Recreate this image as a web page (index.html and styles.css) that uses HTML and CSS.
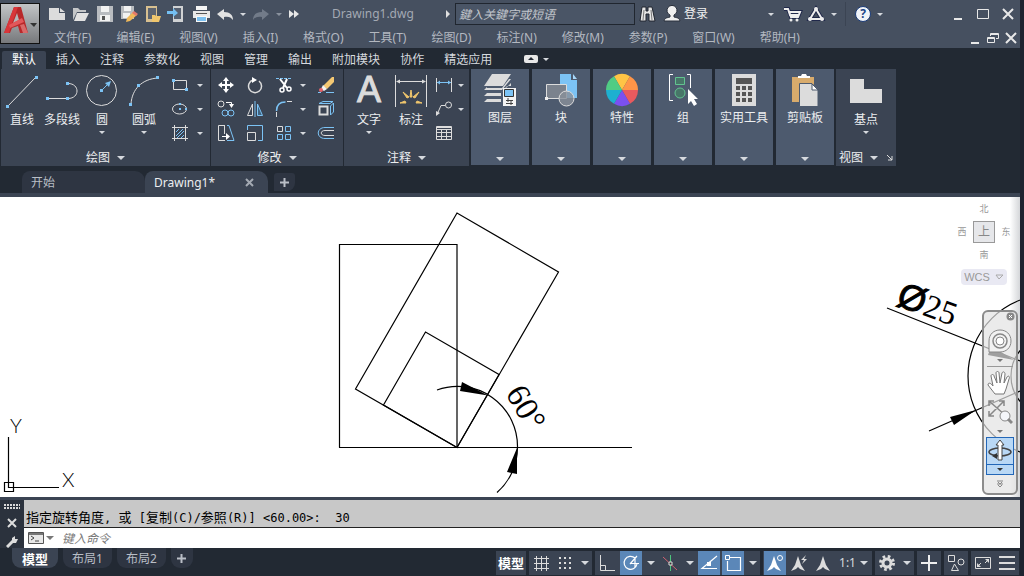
FILE: index.html
```html
<!DOCTYPE html>
<html lang="zh-CN">
<head>
  <meta charset="UTF-8" />
  <meta name="viewport" content="width=device-width, initial-scale=1.0" />
  <title>Drawing1.dwg</title>
  <link rel="stylesheet" href="styles.css">
</head>
<body>
<div class="app">

  <header class="header">
    <button class="app-btn" aria-label="应用程序菜单">
      <svg width="38" height="39" viewBox="0 0 38 39">
        <path d="M3 29L13 3h7l7 26h-8l-2-7-6 2-2 5z" fill="#b8282a"/>
        <path d="M13 3h4l-6 16-3 10H3z" fill="#d8363a"/>
        <path d="M16 9l-4 10 6-3z" fill="#b4b6b8"/>
        <path d="M8 21l13-7 2 4-14 6z" fill="#e2575a"/>
        <path d="M19 21l4-1 4 9h-5z" fill="#d86a6a"/>
        <path d="M29 19h7l-3 4z" fill="#333"/>
      </svg>
    </button>
    <div class="header-rows">
      <div class="title-row">
        <button class="ic" aria-label="新建"><svg viewBox="0 0 24 24"><path d="M4 6h10v5h6v7H4z" fill="#dcdcdc"/><path d="M15 6l5 4h-5z" fill="#dcdcdc"/></svg></button>
        <button class="ic" aria-label="打开"><svg viewBox="0 0 24 24"><path d="M4 18V6h5l2 2h6v2H8z" fill="#c4c6c8"/><path d="M8 11h12l-4 8H5z" fill="#e2e2e2"/></svg></button>
        <button class="ic" aria-label="保存"><svg viewBox="0 0 24 24"><path d="M4 4h16v16H4z" fill="#b9bcc0"/><path d="M8 4h8v6H8z" fill="#f2f2f2"/><path d="M7 13h10v6H7z" fill="#f2f2f2"/><path d="M9 14h3v4H9z" fill="#555"/></svg></button>
        <button class="ic" aria-label="另存为"><svg viewBox="0 0 24 24"><path d="M4 4h13v13H4z" fill="#b9bcc0"/><path d="M7 4h7v5H7zM6 11h7v5H6z" fill="#f2f2f2"/><path d="M9 20l1-4 6-6 4 3-7 6z" fill="#f0b95a"/><path d="M15 11l2-2 4 3-2 2z" fill="#e47a6b"/></svg></button>
        <button class="ic" aria-label="从移动设备打开"><svg viewBox="0 0 24 24"><path d="M5 4h11v16H5z" fill="#d8c090"/><path d="M7 6h8v11H7z" fill="#5d6470"/><path d="M11 20v-7h3l1 1h5l-2 6z" fill="#f0c66d"/></svg></button>
        <button class="ic" aria-label="保存到移动设备"><svg viewBox="0 0 24 24"><path d="M8 4h10v16H8z" fill="#d0d2d4"/><path d="M9 6h7v11H9z" fill="#566070"/><path d="M2 9h6V6l5 5-5 4v-3H2z" fill="#74bff2"/></svg></button>
        <button class="ic" aria-label="打印"><svg viewBox="0 0 24 24"><path d="M7 4h11v4H7z" fill="#f5f5f5"/><path d="M4 9h17v7H4z" fill="#e8e8e8"/><path d="M7 11h11v1H7z" fill="#555"/><path d="M7 14h11v6H7z" fill="#f8f8f8"/><path d="M8 15h9v4H8z" fill="#7cc0f0"/></svg></button>
        <button class="ic" aria-label="放弃"><svg viewBox="0 0 24 24"><path d="M4 12l7-5v3c6 0 9 3 9 8-2-3-5-4-9-3v3z" fill="#e2e2e2"/></svg></button>
        <button class="drop" aria-label="放弃列表"><i class="caret"></i></button>
        <button class="ic" aria-label="重做"><svg viewBox="0 0 24 24"><path d="M20 12l-7-5v3c-6 0-9 3-9 8 2-3 5-4 9-3v3z" fill="#727b89"/></svg></button>
        <button class="drop" aria-label="重做列表"><i class="caret dim-caret"></i></button>
        <button class="drop wide" aria-label="更多"><svg width="10" height="8" viewBox="0 0 10 8"><path d="M0 0l5 4-5 4zM5 0l5 4-5 4z" fill="#e8e8e8"/></svg></button>
        <h1 class="doc-title">Drawing1.dwg</h1>
        <i class="arrow-right"></i>
        <input class="search" type="text" aria-label="搜索" placeholder="鍵入关鍵字或短语">
        <button class="ic" aria-label="查找"><svg viewBox="0 0 24 24"><path d="M7 5h4v4h2V5h4l3 14h-6v-7h-3v7H5z" fill="#e6e6e6" stroke="#20252e"/><path d="M9 8L8 18M16 8l1 10" stroke="#777"/></svg></button>
        <button class="ic" aria-label="用户"><svg viewBox="0 0 24 24"><path d="M5 19c1-4 4-3 6-4v-2a5 5 0 1 1 4 0v2c2 1 5 0 6 4z" fill="#f0f0f0" stroke="#2a303c"/></svg></button>
        <button class="login">登录</button>
        <button class="drop" aria-label="登录选项"><i class="caret"></i></button>
        <button class="ic" aria-label="应用商店"><svg viewBox="0 0 24 24"><path d="M4 7h4l3 8h7l2-5H9" fill="none" stroke="#20284a" stroke-width="4"/><path d="M4 7h4l3 8h7l2-5H9l1 3h9" fill="none" stroke="#eee" stroke-width="2"/><circle cx="11" cy="18" r="1.500" fill="#eee"/><circle cx="17" cy="18" r="1.500" fill="#eee"/></svg></button>
        <button class="ic" aria-label="保持连接"><svg viewBox="0 0 24 24"><path d="M12 7l6 10H6z" fill="none" stroke="#20284a" stroke-width="4"/><path d="M12 7l6 10H6z" fill="none" stroke="#eee" stroke-width="2"/><circle cx="12" cy="7" r="2" fill="#eee"/><circle cx="6" cy="17" r="2" fill="#eee"/><circle cx="18" cy="17" r="2" fill="#eee"/></svg></button>
        <button class="drop" aria-label="连接选项"><i class="caret"></i></button>
        <i class="sep"></i>
        <button class="help" aria-label="帮助">?</button>
        <button class="drop" aria-label="帮助选项"><i class="caret"></i></button>
        <div class="win-btns">
          <button aria-label="最小化"><svg width="12" height="12"><path d="M2 11h8" stroke="#e8e8e8" stroke-width="2"/></svg></button>
          <button aria-label="最大化"><svg width="12" height="12"><path d="M.5 1.500h11v9H.5z" fill="none" stroke="#e8e8e8"/></svg></button>
          <button aria-label="关闭"><svg width="12" height="12"><path d="M1 1l10 10M11 1L1 11" stroke="#e8e8e8" stroke-width="2"/></svg></button>
        </div>
      </div>
      <nav class="menu-row">
        <a href="#">文件(F)</a>
        <a href="#">编辑(E)</a>
        <a href="#">视图(V)</a>
        <a href="#">插入(I)</a>
        <a href="#">格式(O)</a>
        <a href="#">工具(T)</a>
        <a href="#">绘图(D)</a>
        <a href="#">标注(N)</a>
        <a href="#">修改(M)</a>
        <a href="#">参数(P)</a>
        <a href="#">窗口(W)</a>
        <a href="#">帮助(H)</a>
        <div class="win-btns small">
          <button aria-label="最小化图形"><svg width="12" height="12"><path d="M2 11h8" stroke="#e8e8e8" stroke-width="2"/></svg></button>
          <button aria-label="还原图形"><svg width="12" height="12"><path d="M3.500 4V1.500h8v5H9M3 2.500h9M.5 5.500h7v5h-7zM0 6.500h8" fill="none" stroke="#e8e8e8"/></svg></button>
          <button aria-label="关闭图形"><svg width="12" height="12"><path d="M1 1l10 10M11 1L1 11" stroke="#e8e8e8" stroke-width="2"/></svg></button>
        </div>
      </nav>
    </div>
  </header>

  <nav class="ribbon-tabs">
    <a href="#" class="active">默认</a>
    <a href="#">插入</a>
    <a href="#">注释</a>
    <a href="#">参数化</a>
    <a href="#">视图</a>
    <a href="#">管理</a>
    <a href="#">输出</a>
    <a href="#">附加模块</a>
    <a href="#">协作</a>
    <a href="#">精选应用</a>
    <button class="collapse" aria-label="最小化功能区"><svg width="14" height="8"><rect width="14" height="8" rx="2" fill="#e8e8e8"/><path d="M4 5l3-3 3 3z" fill="#222933"/></svg></button>
    <button class="drop" aria-label="功能区选项"><i class="caret"></i></button>
  </nav>

  <section class="ribbon">
    <div class="panel">
      <div class="panel-body">
        <button class="big"><svg viewBox="0 0 36 36"><path d="M4 33L32 4" stroke="#dcdcdc"/><path d="M2 32h3v3H2zM31 3h3v3h-3z" fill="#7cc3f5"/></svg>直线</button>
        <button class="big narrow"><svg viewBox="0 0 36 36"><path d="M4 25.500h20c12 0 12-15 0-15" fill="none" stroke="#dcdcdc"/><path d="M2 24h3v3H2zM22 24h3v3h-3zM22 9h3v3h-3z" fill="#7cc3f5"/></svg>多段线</button>
        <button class="big"><svg viewBox="0 0 36 36"><circle cx="17.500" cy="17.500" r="15" fill="none" stroke="#dcdcdc"/><path d="M18 17l6-6" stroke="#7cc3f5"/><path d="M21 10l6-2-2 6zM16 16h3v3h-3z" fill="#7cc3f5"/></svg>圆<i class="caret"></i></button>
        <button class="big"><svg viewBox="0 0 36 36"><path d="M5 31C6 16 16 6 32 5" fill="none" stroke="#dcdcdc"/><path d="M3 30h3v3H3zM11 11h3v3h-3zM30 3h3v3h-3z" fill="#7cc3f5"/></svg>圆弧<i class="caret"></i></button>
        <div class="tools draw-tools">
          <button aria-label="矩形"><svg viewBox="0 0 18 18"><path d="M2.500 4.500h13v9h-13z" fill="none" stroke="#dcdcdc"/><path d="M1 3h3v3H1zM14 12h3v3h-3z" fill="#7cc3f5"/></svg></button><button aria-label="矩形列表"><i class="caret"></i></button>
          <button aria-label="椭圆"><svg viewBox="0 0 18 18"><ellipse cx="8.500" cy="9" rx="7" ry="5" fill="none" stroke="#dcdcdc"/><path d="M8 8h2v2H8zM8 3h2v2H8zM14 8h2v2h-2z" fill="#7cc3f5"/></svg></button><button aria-label="椭圆列表"><i class="caret"></i></button>
          <button aria-label="图案填充"><svg viewBox="0 0 18 18"><path d="M1 3.500h16M1 14.500h16M3.500 1v16M14.500 1v16" stroke="#dcdcdc"/><path d="M5 8l3-3M5 12l7-7M6 14l7-7M10 14l3-3" stroke="#7cc3f5"/></svg></button><button aria-label="填充列表"><i class="caret"></i></button>
        </div>
      </div>
      <button class="panel-title">绘图<i class="caret large"></i></button>
    </div>

    <div class="panel">
      <div class="panel-body">
        <div class="tools modify-tools">
          <button aria-label="移动"><svg viewBox="0 0 18 18"><path d="M9 3v12M3 9h12" stroke="#fff" stroke-width="2"/><path d="M9 1l3 4H6zM9 17l3-4H6zM1 9l4-3v6zM17 9l-4-3v6z" fill="#fff"/></svg></button>
          <button aria-label="旋转"><svg viewBox="0 0 18 18"><path d="M7 4a6.500 6.500 0 1 0 6 1" fill="none" stroke="#dcdcdc" stroke-width="1.500"/><path d="M6 1l5 3-5 3z" fill="#fff"/></svg></button>
          <button aria-label="修剪"><svg viewBox="0 0 18 18"><path d="M1 2.500h16" stroke="#7cc3f5" stroke-dasharray="3 1"/><path d="M5 3l7 9M12 3l-4 9" stroke="#fff" stroke-width="2"/><circle cx="7" cy="14" r="2" fill="none" stroke="#fff" stroke-width="1.500"/><circle cx="14" cy="13" r="2" fill="none" stroke="#fff" stroke-width="1.500"/></svg></button><button aria-label="修剪列表"><i class="caret"></i></button>
          <button aria-label="删除"><svg viewBox="0 0 18 18"><path d="M17 1v5l-7 7-4-3 9-9z" fill="#f4c873"/><path d="M6 9l4 4-3 2-3-2z" fill="#f4f4f4"/><circle cx="4" cy="14" r="2" fill="#e5646a"/><path d="M1 16.500h3M9 16.500h8" stroke="#7cc3f5"/></svg></button>
          <button aria-label="复制"><svg viewBox="0 0 18 18"><circle cx="4" cy="4" r="3" fill="none" stroke="#dcdcdc"/><path d="M9 2.500h5.500V6" fill="none" stroke="#fff"/><path d="M12 4h5l-2.500 4z" fill="#fff"/><circle cx="8" cy="13" r="3" fill="none" stroke="#7cc3f5"/><circle cx="14" cy="13" r="3" fill="none" stroke="#7cc3f5"/></svg></button>
          <button aria-label="镜像"><svg viewBox="0 0 18 18"><path d="M6.500 4v11.500H1.500z" fill="none" stroke="#dcdcdc"/><path d="M11.500 4v11.500h5z" fill="#3f6482" stroke="#7cc3f5"/><path d="M9 1v16" stroke="#7cc3f5"/></svg></button>
          <button aria-label="圆角"><svg viewBox="0 0 18 18"><path d="M1.500 11c0-6 3-9 9-9" fill="none" stroke="#7cc3f5" stroke-width="1.500"/><path d="M12 1.500h5M1.500 12v5" stroke="#dcdcdc"/></svg></button><button aria-label="圆角列表"><i class="caret"></i></button>
          <button aria-label="分解"><svg viewBox="0 0 18 18"><path d="M2.500 6.500h8v8h-8z" fill="none" stroke="#dcdcdc" stroke-width="2"/><path d="M2 3.500l4-2h10l-3 2zM13.500 6l3-3v9l-3 3z" fill="none" stroke="#7cc3f5"/></svg></button>
          <button aria-label="拉伸"><svg viewBox="0 0 18 18"><path d="M8 1.500H1.500v15H8M7.500 1v9" fill="none" stroke="#dcdcdc"/><path d="M10 1.500h2l5 15h-7" fill="none" stroke="#7cc3f5"/><path d="M5 12.500h5" stroke="#fff"/><path d="M9 9l4 3.500L9 16z" fill="#fff"/></svg></button>
          <button aria-label="缩放"><svg viewBox="0 0 18 18"><path d="M1.500 6V1.500h15v15H12" fill="none" stroke="#7cc3f5"/><path d="M1.500 8.500h8v8h-8z" fill="none" stroke="#dcdcdc"/></svg></button>
          <button aria-label="阵列"><svg viewBox="0 0 18 18"><path d="M2.500 2.500h5v5h-5z" fill="none" stroke="#dcdcdc"/><path d="M10.500 2.500h5v5h-5zM2.500 10.500h5v5h-5zM10.500 10.500h5v5h-5z" fill="none" stroke="#7cc3f5"/></svg></button><button aria-label="阵列列表"><i class="caret"></i></button>
          <button aria-label="偏移"><svg viewBox="0 0 18 18"><path d="M17 3.500H8c-9 0-9 11 0 11h9" fill="none" stroke="#7cc3f5"/><path d="M17 6.500H8c-5 0-5 5 0 5h9" fill="none" stroke="#dcdcdc"/></svg></button>
        </div>
      </div>
      <button class="panel-title">修改<i class="caret large"></i></button>
    </div>

    <div class="panel annotate">
      <div class="panel-body">
        <button class="big"><svg viewBox="0 0 36 36"><text x="18" y="29" class="big-a">A</text></svg>文字<i class="caret"></i></button>
        <button class="big"><svg viewBox="0 0 36 36"><path d="M2.500 2v32M33.500 2v32M4 8.500h28" stroke="#dcdcdc"/><path d="M3 8.500l4-2v4zM33 8.500l-4-2v4z" fill="#dcdcdc"/><path d="M17 24l1-7 1 7zM14 25l-4-6 6 5zM22 25l4-6-6 5zM12 28l-5 2h6zM24 28l5 2h-6z" fill="#f0c66d" stroke="#f0c66d"/></svg>标注</button>
        <div class="tools note-tools">
          <button aria-label="线性"><svg viewBox="0 0 18 18"><path d="M1.500 2v14M16.500 2v14" stroke="#dcdcdc"/><path d="M2 6.500h14" stroke="#7cc3f5"/><path d="M2 6.500l3-2v4zM16 6.500l-3-2v4z" fill="#7cc3f5"/></svg></button><button aria-label="标注列表"><i class="caret"></i></button>
          <button aria-label="引线"><svg viewBox="0 0 18 18"><circle cx="13.500" cy="5" r="3" fill="none" stroke="#dcdcdc"/><path d="M10 5.500H6l-4 9" fill="none" stroke="#dcdcdc"/><path d="M1 16v-5l4 2z" fill="#dcdcdc"/></svg></button><button aria-label="引线列表"><i class="caret"></i></button>
          <button aria-label="表格"><svg viewBox="0 0 18 18"><path d="M1.500 2.500h15v13h-15zM1 5.500h16M1 8.500h16M1 12.500h16M6.500 6v10M11.500 6v10M1 3.500h16" fill="none" stroke="#dcdcdc"/></svg></button>
        </div>
      </div>
      <button class="panel-title">注释<i class="caret large"></i></button>
    </div>

    <button class="group">
      <svg viewBox="0 0 36 36"><path d="M10 1h19L21 13H2zM5 14l-3 3h18l9-11-2 0-7 9H5zM5 20l-3 3h17v-3zM5 26l-3 3h17v-3zM20 19l9-9v3h-4z" fill="#dcdcdc"/><path d="M21 15h13v18H21z" fill="#f4f4f4"/><path d="M22.500 16.500h9v7h-9z" fill="#7cc3f5" stroke="#333"/><path d="M24 27.500h7M24 30.500h7M26 25v4M29 28v4" stroke="#444"/></svg>
      图层<i class="caret large"></i>
    </button>
    <button class="group">
      <svg viewBox="0 0 36 36"><path d="M17 1h11v6h6v18H17z" fill="#7cc3f5"/><path d="M30 1l4 5h-4z" fill="#a8d8fa"/><path d="M3.500 11.500h20v14h-20z" fill="#7b828d" stroke="#dcdcdc"/><path d="M2 24h3v3H2z" fill="#eee"/><circle cx="23.500" cy="25.500" r="7.500" fill="#8a909a" fill-opacity=".8" stroke="#dcdcdc"/></svg>
      块<i class="caret large"></i>
    </button>
    <button class="group">
      <svg viewBox="0 0 36 36">
        <path d="M18 17L10 3.150A16 16 0 0 1 26 3.150z" fill="#ffc445"/>
        <path d="M18 17L26 3.150A16 16 0 0 1 34 17z" fill="#ff9548"/>
        <path d="M18 17h16A16 16 0 0 1 26 30.850z" fill="#e85a5e"/>
        <path d="M18 17l8 13.850a16 16 0 0 1-16 0z" fill="#7b50f0"/>
        <path d="M18 17l-8 13.850A16 16 0 0 1 2 17z" fill="#1eb0d0"/>
        <path d="M18 17H2A16 16 0 0 1 10 3.150z" fill="#50cc84"/>
      </svg>
      特性<i class="caret large"></i>
    </button>
    <button class="group">
      <svg viewBox="0 0 36 36"><path d="M8 1.500H4.500v26H8M22 1.500h3.500V15" fill="none" stroke="#fff"/><path d="M10.500 4.500h9v7h-9z" fill="#477668" stroke="#62c490"/><circle cx="15" cy="20" r="5" fill="#477668" stroke="#62c490"/><path d="M23 16v15l3-3 3 5 3-2-3-5h4z" fill="#fff"/></svg>
      组<i class="caret large"></i>
    </button>
    <button class="group">
      <svg viewBox="0 0 36 36"><path d="M6 1h24v32H6z" fill="#dcdcdc"/><path d="M10 5h16v6H10zM10 13h4v4h-4zM16 13h4v4h-4zM22 13h4v4h-4zM10 19h4v4h-4zM16 19h4v4h-4zM22 19h4v4h-4zM10 25h4v4h-4zM16 25h4v4h-4zM22 25h4v4h-4z" fill="#555"/></svg>
      实用工具<i class="caret large"></i>
    </button>
    <button class="group">
      <svg viewBox="0 0 36 36"><path d="M5 4h22v25H5z" fill="#d8ab6c"/><path d="M11 5V3h3l1-2h4l1 2h3v2z" fill="#fff"/><path d="M12.500 10.500H25l6 6v17H12.500z" fill="#dcdcdc" stroke="#4d5a6e"/><path d="M25 11l6 6h-6z" fill="#fff" stroke="#4d5a6e"/></svg>
      剪贴板<i class="caret large"></i>
    </button>

    <div class="panel view">
      <div class="panel-body">
        <button class="big"><svg viewBox="0 0 36 36"><path d="M2 6h14v10h18v14H2z" fill="#dcdcdc"/></svg>基点<i class="caret"></i></button>
      </div>
      <button class="panel-title">视图<i class="caret large"></i><svg class="launch" width="6" height="6"><path d="M0 0l5 5M5 1v4H1" fill="none" stroke="#dcdcdc"/></svg></button>
    </div>
  </section>

  <nav class="file-tabs">
    <a href="#" class="file-tab">开始</a>
    <a href="#" class="file-tab active">Drawing1*<svg class="close" width="9" height="9"><path d="M1 1l7 7M8 1L1 8" stroke="#a4aab3" stroke-width="2"/></svg></a>
    <button class="add-tab" aria-label="新图形"><svg width="9" height="9"><path d="M4.500 0v9M0 4.500h9" stroke="#b9bec6" stroke-width="2"/></svg></button>
  </nav>

  <main class="canvas">
    <svg class="drawing" viewBox="0 197 1020 300" preserveAspectRatio="xMinYMin slice">
      <g fill="none" stroke="#000" stroke-width="1.200">
        <path d="M339.500 447.500V244.500H457V447.500M339 447.500H632"/>
        <path d="M457 447.500L355.500 389 457 213 558.500 272z"/>
        <path d="M457 447.500L383.500 405 425.500 332 499 374.500z"/>
        <path d="M437 390A60 60 0 0 1 517.500 447A60 60 0 0 1 497 492.500"/>
        <circle cx="1049.500" cy="376" r="81.500"/>
        <circle cx="1051" cy="376" r="40"/>
        <path d="M887 308L1020 361M929 431L1020 391"/>
        <path d="M8.500 437V487.500H59M4.500 482.500h9v9h-9z"/>
      </g>
      <path d="M488 395.500L462 382 460 391zM517 448L517 474 507 472zM976 410L950 417 954 425zM1014 360L991 346 988 355z"/>
      <text x="10" y="433" class="ucs">Y</text>
      <text x="62" y="487" class="ucs">X</text>
      <text class="dim" transform="translate(505 393) rotate(60)">60°</text>
      <text class="dim" transform="translate(895 305) rotate(20)"><tspan class="dia">Ø</tspan>25</text>
    </svg>

    <div class="viewcube">
      <span class="north">北</span>
      <span>西</span>
      <button class="face">上</button>
      <span>东</span>
      <span class="south">南</span>
    </div>
    <button class="wcs">WCS <svg width="9" height="6"><path d="M1 1h7L4 5z" fill="none" stroke="#aaa"/></svg></button>

    <div class="navbar">
      <button class="nav-close" aria-label="关闭导航栏"><svg width="9" height="9"><circle cx="4.500" cy="4.500" r="4" fill="#888"/><path d="M3 3l3 3M6 3L3 6" stroke="#fff"/></svg></button>
      <button aria-label="导航控制盘"><svg width="26" height="26"><path d="M2 24V13C2 6 7 2 13 2s11 4 11 11-5 11-11 11z" fill="#f2f2f2" stroke="#888"/><circle cx="13" cy="13" r="7" fill="none" stroke="#888" stroke-width="1.500"/><circle cx="13" cy="13" r="4" fill="#fff" stroke="#888"/></svg></button>
      <i class="caret gray"></i>
      <i class="rule"></i>
      <button class="nav-tool" aria-label="平移"><svg width="26" height="26"><path d="M8 24L1 15c0-3 3-2 5 1L4 6c0-2 3-2 3 0l3 7-1-10c0-2 3-2 3 0l1 10 2-10c1-2 3-1 3 1l-1 9 3-6c2-2 3 0 2 2l-3 10-2 5z" fill="#fff" stroke="#777"/></svg></button>
      <button class="nav-tool" aria-label="范围缩放"><svg width="26" height="26"><path d="M2 2l16 14M17 2L2 17M2 7V2h5M12 2h5v5M2 12v5h5" fill="none" stroke="#888" stroke-width="1.500"/><circle cx="18" cy="17" r="5" fill="#f4f6fa" stroke="#888"/><path d="M21 20l4 4" stroke="#888" stroke-width="3"/></svg></button>
      <i class="caret gray"></i>
      <button class="orbit" aria-label="动态观察"><svg width="26" height="26"><ellipse cx="13" cy="14" rx="11" ry="4" fill="none" stroke="#444" stroke-width="1.500"/><path d="M11 22V7H9l4-5 4 5h-2v15z" fill="#fff" stroke="#444"/><path d="M5 18l5-3v6z" fill="#333"/></svg></button>
      <button class="orbit-drop" aria-label="动态观察列表"><i class="caret dark"></i></button>
      <button class="nav-more" aria-label="自定义"><svg width="8" height="8"><path d="M1 1h6M1 4h6" stroke="#888"/><path d="M2 2l2 2 2-2M2 5l2 2 2-2" fill="none" stroke="#888"/></svg></button>
    </div>
  </main>

  <section class="command">
    <div class="cmd-side">
      <svg width="18" height="6"><path d="M1 1h16M1 4h16" stroke="#d8d8d8" stroke-width="2" stroke-dasharray="2 1"/></svg>
      <button aria-label="关闭命令行"><svg width="10" height="10"><path d="M1 1l8 8M9 1L1 9" stroke="#ddd" stroke-width="2"/></svg></button>
      <button aria-label="自定义命令行"><svg width="12" height="12"><path d="M1 11l6-6" stroke="#ddd" stroke-width="3"/><path d="M6 6V2l3-2v3h3l-2 4H7z" fill="#ddd"/></svg></button>
    </div>
    <div class="cmd-main">
      <div class="cmd-log"><b>指定旋转角度</b>, <b>或</b> [<b>复制</b>(C)/<b>参照</b>(R)] &lt;60.00&gt;:&nbsp; 30</div>
      <div class="cmd-line">
        <svg width="16" height="12"><path d="M.5.5h15v11H.5z" fill="#e8e8e8" stroke="#555"/><path d="M1 1h14v2H1z" fill="#777"/><path d="M3 4l3 2-3 2M7 9h4" fill="none" stroke="#444"/></svg>
        <i class="caret large gray"></i>
        <input type="text" aria-label="命令" placeholder="键入命令">
      </div>
    </div>
  </section>

  <footer class="status">
    <nav class="layouts">
      <a href="#" class="active">模型</a>
      <a href="#">布局1</a>
      <a href="#">布局2</a>
      <button aria-label="新建布局"><svg width="9" height="9"><path d="M4.500 0v9M0 4.500h9" stroke="#b9bec6" stroke-width="2"/></svg></button>
    </nav>
    <div class="toggles">
      <div class="tg"><button class="text"><b>模型</b></button></div>
      <div class="tg">
        <button aria-label="栅格"><svg viewBox="0 0 18 18"><path d="M4.500 2v15M9.500 2v15M14.500 2v15M2 4.500h15M2 9.500h15M2 14.500h15" stroke="#dcdcdc"/></svg></button>
        <button aria-label="捕捉"><svg viewBox="0 0 18 18"><path d="M3 4h12M3 9h12M3 14h12" stroke="#dcdcdc" stroke-width="2" stroke-dasharray="2 3"/></svg></button>
        <button class="dd" aria-label="捕捉设置"><i class="caret large"></i></button>
      </div>
      <div class="tg">
        <button aria-label="正交"><svg viewBox="0 0 18 18"><path d="M2.500 1v15.500H17M2.500 11.500h5v5" fill="none" stroke="#dcdcdc"/></svg></button>
        <button class="on" aria-label="极轴"><svg viewBox="0 0 18 18"><path d="M13 4a6.500 6.500 0 1 0 2 6M8 10l7-8M8 9.500h9M13 5v8" fill="none" stroke="#fff" stroke-width="1.200"/></svg></button>
        <button class="dd" aria-label="极轴设置"><i class="caret large"></i></button>
        <button aria-label="等轴测"><svg viewBox="0 0 18 18"><path d="M9.500 1v16" stroke="#4cc47c"/><path d="M2 3l14 13" stroke="#d06070"/><path d="M8 8h3v3H8z" fill="#333" stroke="#ddd"/></svg></button>
        <button class="dd" aria-label="等轴测设置"><i class="caret large"></i></button>
        <button class="on" aria-label="对象捕捉追踪"><svg viewBox="0 0 18 18"><path d="M17 2L2 14.500h15" fill="none" stroke="#fff" stroke-width="1.200"/><path d="M7 8h4v4H7z" fill="#fff"/></svg></button>
        <button class="on" aria-label="对象捕捉"><svg viewBox="0 0 18 18"><path d="M6 3.500h10.500v13h-13V7" fill="none" stroke="#fff" stroke-width="1.200"/><path d="M1.500 1.500h4v4h-4z" fill="#5b87b8" stroke="#fff"/></svg></button>
        <button class="dd" aria-label="对象捕捉设置"><i class="caret large"></i></button>
      </div>
      <div class="tg">
        <button class="on" aria-label="注释可见性"><svg viewBox="0 0 18 18"><path d="M8 2l3 9 4 6-5-2-2-2-2 2-5 2 4-6z" fill="#fff"/><circle cx="14" cy="4" r="2.500" fill="none" stroke="#fff"/></svg></button>
        <button aria-label="自动缩放"><svg viewBox="0 0 18 18"><path d="M8 2l3 9 4 6-5-2-2-2-2 2-5 2 4-6z" fill="#dcdcdc"/><path d="M16 1l-5 5h3l-2 4 5-5h-3z" fill="#dcdcdc"/></svg></button>
        <button aria-label="注释比例"><svg viewBox="0 0 18 18"><path d="M9 2l3 9 4 6-5-2-2-2-2 2-5 2 4-6z" fill="#dcdcdc"/></svg></button>
        <button class="scale">1:1<i class="caret large"></i></button>
      </div>
      <div class="tg">
        <button aria-label="切换工作空间"><svg viewBox="0 0 18 18"><circle cx="9" cy="9" r="4" fill="none" stroke="#dcdcdc" stroke-width="3"/><circle cx="9" cy="9" r="6.500" fill="none" stroke="#dcdcdc" stroke-width="3" stroke-dasharray="2.600 2.500"/></svg></button>
        <button class="dd" aria-label="工作空间列表"><i class="caret large"></i></button>
      </div>
      <div class="tg"><button aria-label="注释监视器"><svg viewBox="0 0 18 18"><path d="M9 1v16M1 9h16" stroke="#eee" stroke-width="2"/></svg></button></div>
      <div class="tg"><button aria-label="隔离对象"><svg viewBox="0 0 18 18"><path d="M1.500 1.500h6v6h-6zM7.500 10l4 6.500h-7z" fill="none" stroke="#dcdcdc"/><circle cx="14" cy="8" r="3" fill="none" stroke="#dcdcdc"/></svg></button></div>
      <div class="tg">
        <button aria-label="全屏显示"><svg viewBox="0 0 18 18"><path d="M1.500 3.500h15v11h-15z" fill="none" stroke="#dcdcdc"/><path d="M11 5h4v4zM3 9v4h4z" fill="#dcdcdc"/><path d="M14 6l-3 3M4 12l3-3" stroke="#dcdcdc"/></svg></button>
        <button aria-label="自定义"><svg viewBox="0 0 18 18"><path d="M1 3h16M1 9h16M1 15h16" stroke="#dcdcdc" stroke-width="2"/></svg></button>
      </div>
    </div>
  </footer>

</div>
</body>
</html>
```
FILE: styles.css
```css
* {
  box-sizing: border-box;
}

body {
  margin: 0;
  background: #222933;
  color: #d6d9de;
  font-family: "Noto Sans", "Noto Sans CJK SC", sans-serif;
  font-size: 12px;
  line-height: 16px;
}

a {
  color: inherit;
  text-decoration: none;
}

button {
  border: none;
  padding: 0;
  background: none;
  color: inherit;
  font: inherit;
  display: flex;
  align-items: center;
  justify-content: center;
}

svg {
  display: block;
  flex-shrink: 0;
}

.app {
  display: flex;
  flex-direction: column;
  height: 100vh;
  border-right: 4px solid #1d2430;
}

.caret {
  width: 0;
  height: 0;
  flex-shrink: 0;
  border: 3px solid transparent;
  border-top-color: #d6d9de;
  border-bottom-width: 0;
}

.caret.large {
  border-width: 4px 4px 0;
}

.caret.dim-caret {
  border-top-color: #8a929e;
}

.caret.gray {
  border-top-color: #777;
}

.caret.dark {
  border-top-color: #333;
}

/* header */
.header {
  display: flex;
  height: 48px;
  background: #465060;
}

.app-btn {
  width: 40px;
  height: 41px;
  margin: 3px 5px 0 0;
  border: 1px solid #111;
  background: linear-gradient(#c2c4c6, #77797c);
}

.header-rows {
  flex: 1;
}

.title-row {
  display: flex;
  align-items: center;
  height: 28px;
}

.ic {
  width: 24px;
  height: 28px;
}

.ic svg {
  width: 24px;
  height: 24px;
}

.drop {
  width: 12px;
  height: 24px;
}

.drop.wide {
  width: 18px;
}

.doc-title {
  width: 143px;
  margin: 0;
  padding-left: 29px;
  font-size: 12px;
  font-weight: normal;
  color: #a3a9b3;
}

.arrow-right {
  border: 4px solid transparent;
  border-left-color: #e0e0e0;
  border-right-width: 0;
  margin-right: 5px;
}

.search {
  width: 180px;
  height: 22px;
  padding: 0 3px;
  border: 1px solid #20262f;
  background: #4a5566;
  color: #d6d9de;
  font: italic 12px "Noto Sans", "Noto Sans CJK SC", sans-serif;
}

.search::placeholder {
  color: #c3c7cd;
}

.login {
  width: 82px;
  padding-left: 1px;
  justify-content: flex-start;
  color: #f0f0f0;
}

.login + .drop {
  margin-right: 3px;
}

.sep {
  width: 1px;
  height: 24px;
  margin: 0 9px 0 5px;
  background: #3b4453;
}

.help {
  width: 16px;
  height: 16px;
  margin-right: 3px;
  border: 1px solid #1c3c78;
  border-radius: 50%;
  background: #f0f3f8;
  color: #1d4688;
  font-weight: bold;
}

.win-btns {
  display: flex;
  margin-left: auto;
}

.win-btns button {
  width: 25px;
  height: 24px;
}

.win-btns.small button {
  width: 18px;
  height: 20px;
}

.menu-row {
  display: flex;
  align-items: center;
  gap: 25px;
  height: 20px;
  padding-left: 9px;
  color: #b3b8c0;
}

/* ribbon */
.ribbon-tabs {
  display: flex;
  align-items: flex-end;
  height: 21px;
  padding-left: 2px;
}

.ribbon-tabs a {
  padding: 1px 10px;
}

.ribbon-tabs .active {
  background: #3b4453;
  color: #fff;
  border-radius: 2px 2px 0 0;
}

.collapse {
  height: 20px;
  margin-left: 22px;
}

.ribbon-tabs .drop {
  height: 20px;
  margin-left: 2px;
}

.ribbon {
  display: flex;
  height: 97px;
  padding-left: 1px;
}

.panel {
  display: flex;
  flex-direction: column;
  margin-right: 1px;
  background: #3b4453;
  color: #eceef0;
}

.panel-body {
  display: flex;
  flex: 1;
  padding-top: 4px;
}

.panel-title {
  height: 18px;
  padding-top: 1px;
  gap: 7px;
}

.big {
  width: 42px;
  height: 66px;
  flex-direction: column;
  justify-content: flex-start;
  white-space: nowrap;
}

.big.narrow {
  width: 38px;
}

.big svg,
.group svg {
  width: 36px;
  height: 36px;
  overflow: visible;
}

.big svg {
  margin-bottom: 3px;
}

.big .caret {
  margin-top: 3px;
}

.group svg {
  margin-bottom: 1px;
}

.big-a {
  font-family: "Liberation Sans", sans-serif;
  font-size: 36px;
  text-anchor: middle;
  fill: #dcdcdc;
  stroke: #dcdcdc;
}

.tools {
  display: grid;
  grid-auto-rows: 24px;
}

.tools svg {
  width: 18px;
  height: 18px;
}

.draw-tools {
  grid-template-columns: 30px 10px;
  padding-right: 5px;
}

.modify-tools {
  grid-template-columns: 29px 30px 28px 10px 35px;
}

.note-tools {
  grid-template-columns: 24px 10px;
}

.annotate {
  width: 125px;
}

.annotate .panel-body {
  padding-left: 4px;
}

.group {
  flex-direction: column;
  justify-content: flex-start;
  width: 58px;
  height: 96px;
  margin: 0 2px 0 1px;
  padding-top: 4px;
  background: #4d5a6e;
  color: #eceef0;
}

.group .caret {
  margin: auto 0 4px;
}

.view {
  width: 60px;
}

.view .panel-body {
  justify-content: center;
}

.launch {
  margin-left: 2px;
}

/* file tabs */
.file-tabs {
  display: flex;
  align-items: flex-end;
  height: 31px;
  padding-left: 22px;
  border-bottom: 4px solid #3b4453;
}

.file-tab {
  display: flex;
  align-items: center;
  width: 123px;
  height: 22px;
  padding: 1px 9px 0;
  border-radius: 8px 10px 0 0;
  background: #2e3542;
  color: #b9bec6;
}

.file-tab.active {
  background: #3b4453;
  color: #eceef0;
}

.close {
  margin-left: auto;
  margin-right: 5px;
}

.add-tab {
  width: 21px;
  height: 18px;
  margin: 0 0 2px 6px;
  border-radius: 3px 3px 8px 0;
  background: #2e3542;
}

/* drawing area */
.canvas {
  position: relative;
  flex: 1;
  min-height: 0;
  overflow: hidden;
  background: linear-gradient(to left, #d4d6d9, #fff 10px);
}

.drawing {
  width: 100%;
  height: 100%;
}

.ucs {
  font-family: Lato, sans-serif;
  font-size: 20px;
  font-weight: 300;
}

.dim {
  font-family: "Liberation Serif", serif;
  font-size: 33px;
}

.dia {
  font-family: "Liberation Sans", sans-serif;
  font-size: 36px;
  stroke: #000;
}

.viewcube {
  position: absolute;
  top: 2px;
  right: 3px;
  display: grid;
  grid-template-columns: 22px 22px 22px;
  grid-template-rows: 20px 26px 20px;
  place-items: center;
  color: #999;
  font-size: 9px;
}

.north,
.south {
  grid-column: 1 / 4;
}

.face {
  width: 22px;
  height: 22px;
  border: 1px solid #999;
  background: #e6e7ea;
  color: #888;
  font-size: 12px;
}

.wcs {
  position: absolute;
  top: 72px;
  right: 13px;
  width: 46px;
  height: 16px;
  gap: 5px;
  border-radius: 4px;
  background: #e9e9f3;
  color: #999;
  font: 11px "Liberation Sans", sans-serif;
}

.navbar {
  position: absolute;
  top: 113px;
  right: 2px;
  display: flex;
  flex-direction: column;
  align-items: center;
  width: 36px;
  height: 185px;
  border: 2px solid #8c8c8c;
  border-radius: 6px;
  background: rgba(226, 226, 226, 0.7);
}

.nav-close {
  align-self: flex-end;
  height: 9px;
  margin: 0 1px 7px 0;
}

.navbar .caret {
  margin: 5px 0 4px;
}

.navbar .orbit-drop .caret {
  margin: 0;
}

.nav-tool {
  margin-top: 3px;
}

.rule {
  width: 26px;
  height: 1px;
  background: #999;
}

.orbit {
  width: 28px;
  height: 28px;
  border: 1px solid #2367b8;
  background: #b9d8f5;
}

.orbit-drop {
  width: 28px;
  height: 10px;
  border: 1px solid #2367b8;
  border-top: none;
  background: #b9d8f5;
}

.nav-more {
  margin: auto;
}

/* command line */
.command {
  display: flex;
  height: 51px;
  border-top: 3px solid #3b4453;
}

.cmd-side {
  display: flex;
  flex-direction: column;
  align-items: center;
  justify-content: space-between;
  width: 24px;
  padding: 4px 0 0;
  background: #2b323d;
}

.cmd-main {
  flex: 1;
}

.cmd-log {
  height: 28px;
  padding: 10px 2px 0;
  border-bottom: 1px solid #222;
  background: #c8c8c8;
  color: #000;
  font-family: "DejaVu Sans Mono", "Noto Sans CJK SC", monospace;
}

.cmd-log b {
  font-size: 13px;
  font-weight: normal;
}

.cmd-line {
  display: flex;
  align-items: center;
  gap: 2px;
  height: 20px;
  padding-left: 4px;
  background: #fff;
}

.cmd-line input {
  flex: 1;
  padding: 0 6px;
  border: none;
  outline: none;
  font: italic 12px "Noto Sans", "Noto Sans CJK SC", sans-serif;
}

.cmd-line input::placeholder {
  color: #777;
}

/* status bar */
.status {
  display: flex;
  justify-content: space-between;
  height: 28px;
}

.layouts {
  display: flex;
  align-items: flex-start;
  gap: 5px;
  padding-left: 12px;
}

.layouts a,
.layouts button {
  height: 20px;
  padding: 3px 9px 1px;
  border-radius: 0 0 9px 9px;
  background: #2e3542;
  color: #b9bec6;
}

.layouts .active {
  padding: 3px 10px 1px;
  background: #3b4453;
  color: #fff;
  font-size: 13px;
  font-weight: bold;
}

.layouts button {
  width: 22px;
  padding: 0;
}

.toggles {
  display: flex;
  gap: 3px;
  padding: 3px 1px 1px 0;
}

.tg {
  display: flex;
  background: #3b4453;
}

.tg button {
  width: 24px;
  height: 24px;
}

.tg .text {
  width: 30px;
  color: #fff;
  font-size: 13px;
}

.tg .dd {
  width: 15px;
}

.tg .on {
  width: 22px;
  margin: 0 1px;
  background: #5b87b8;
}

.tg .scale {
  width: 37px;
  gap: 4px;
}

.tg svg {
  width: 18px;
  height: 18px;
}
```
